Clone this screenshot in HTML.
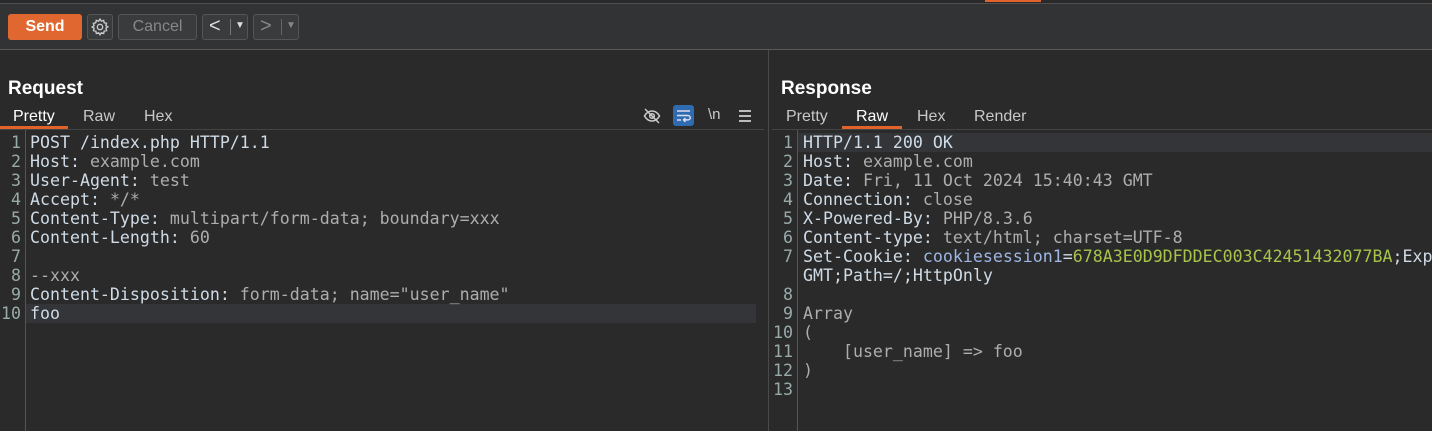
<!DOCTYPE html>
<html><head><meta charset="utf-8"><style>
*{margin:0;padding:0;box-sizing:border-box}
body{width:1432px;height:431px;background:#2a2a2a;overflow:hidden;position:relative;font-family:"Liberation Sans",sans-serif;color:#ddd}
.top{position:absolute;left:0;top:0;width:1432px;height:3px;background:#2a2a2a}
.orange{position:absolute;left:985px;top:0;width:56px;height:2px;background:#e2622c}
.tb{position:absolute;left:0;top:3px;width:1432px;height:47px;background:#323335;border-top:1px solid #4e4e4e;border-bottom:1px solid #5a5a5a}
.btn{position:absolute;top:11px;height:26px;border:1px solid #555;border-radius:3px;background:#3a3b3d;color:#888;font-size:16px;line-height:24px;text-align:center}
.send{left:8px;width:74px;background:#e0672f;border-color:#e0672f;color:#fff;font-weight:bold}
h2{position:absolute;top:78px;font-size:19px;font-weight:bold;color:#fff}
.tabs{position:absolute;top:108px;font-size:16px;color:#c8c8c8}
.tabs span{position:absolute;top:0;white-space:nowrap}
.ul{position:absolute;height:3px;background:#e2622c;top:126px}
.hl{position:absolute;height:1px;background:#444;top:129px}
.code{position:absolute;top:133px;font-family:"DejaVu Sans Mono",monospace;font-size:16.6px;line-height:19px;white-space:pre}
.gut{position:absolute;top:130px;height:301px;border-right:1px solid #555}
.ln{color:#9aa;text-align:right}
.k{color:#cfdbe6}.v{color:#adadad}.cn{color:#9db6e4}.cv{color:#a7c34b}
.row{position:absolute;height:19px;background:#333538}
</style></head><body>
<div class="top"></div><div class="orange"></div>
<div class="tb">
<div class="btn send" style="top:10px">Send</div>
<div class="btn" style="left:87px;top:10px;width:26px;padding-top:2px"><svg width="20" height="20" viewBox="0 0 24 24" fill="none" stroke="#ccc" stroke-width="1.6"><circle cx="12" cy="12" r="3.2"/><path d="M12 2.5l1.6 2.4 2.8-.9.6 2.9 2.9.6-.9 2.8 2.4 1.6-2.4 1.6.9 2.8-2.9.6-.6 2.9-2.8-.9-1.6 2.4-1.6-2.4-2.8.9-.6-2.9-2.9-.6.9-2.8L2.5 12l2.4-1.6-.9-2.8 2.9-.6.6-2.9 2.8.9z"/></svg></div>
<div class="btn" style="left:118px;top:10px;width:79px">Cancel</div>
<div class="btn" style="left:202px;top:10px;width:46px;color:#ddd;text-align:left;padding-left:6px;font-size:20px;line-height:22px">&lt;<span style="position:absolute;left:27px;top:4px;width:1px;height:16px;background:#777"></span><span style="position:absolute;left:32px;top:0;font-size:10px">▼</span></div>
<div class="btn" style="left:253px;top:10px;width:46px;color:#888;text-align:left;padding-left:6px;font-size:20px;line-height:22px">&gt;<span style="position:absolute;left:27px;top:4px;width:1px;height:16px;background:#666"></span><span style="position:absolute;left:32px;top:0;font-size:10px">▼</span></div>
</div>
<div style="position:absolute;left:768px;top:50px;width:1px;height:381px;background:#4a4a4a"></div>
<h2 style="left:8px">Request</h2>
<h2 style="left:781px">Response</h2>
<div class="tabs"><span style="left:13px;color:#fff">Pretty</span><span style="left:83px">Raw</span><span style="left:144px">Hex</span>
<span style="left:786px">Pretty</span><span style="left:856px;color:#fff">Raw</span><span style="left:917px">Hex</span><span style="left:974px">Render</span></div>
<div class="hl" style="left:0;width:764px"></div><div class="hl" style="left:772px;width:660px"></div>
<div class="ul" style="left:0;width:68px"></div><div class="ul" style="left:842px;width:60px"></div>
<svg style="position:absolute;left:643px;top:107px" width="18" height="18" viewBox="0 0 18 18" fill="none" stroke="#ccc" stroke-width="1.5"><path d="M1.5 9c2-3.5 4.5-5 7.5-5s5.5 1.5 7.5 5c-2 3.5-4.5 5-7.5 5S3.5 12.5 1.5 9z"/><circle cx="9" cy="9" r="2.3"/><path d="M2 2l14 14"/></svg>
<div style="position:absolute;left:673px;top:105px;width:21px;height:21px;background:#2e6bb0;border-radius:3px"><svg width="21" height="21" viewBox="0 0 21 21" fill="none" stroke="#dde" stroke-width="1.5"><path d="M4 6h13M4 10.5h11a2.2 2.2 0 010 4.4h-4M4 15h4M12.5 13l-2 1.9 2 1.9"/></svg></div>
<div style="position:absolute;left:708px;top:106px;font-size:15px;color:#ccc">\n</div>
<div style="position:absolute;left:739px;top:110px;width:12px"><div style="height:2px;background:#bbb;margin-bottom:3px"></div><div style="height:2px;background:#bbb;margin-bottom:3px"></div><div style="height:2px;background:#bbb"></div></div>
<div class="row" style="left:26px;top:304px;width:730px"></div>
<div class="row" style="left:798px;top:133px;width:634px"></div>
<div class="gut" style="left:0;width:26px"></div>
<div class="gut" style="left:772px;width:26px"></div>
<div class="code ln" style="left:0;width:21px">1
2
3
4
5
6
7
8
9
10</div>
<div class="code" style="left:30px"><span class="k">POST /index.php HTTP/1.1</span>
<span class="k">Host: </span><span class="v">example.com</span>
<span class="k">User-Agent: </span><span class="v">test</span>
<span class="k">Accept: </span><span class="v">*/*</span>
<span class="k">Content-Type: </span><span class="v">multipart/form-data; boundary=xxx</span>
<span class="k">Content-Length: </span><span class="v">60</span>

<span class="v">--xxx</span>
<span class="k">Content-Disposition: </span><span class="v">form-data; name="user_name"</span>
<span class="k">foo</span></div>
<div class="code ln" style="left:772px;width:21px">1
2
3
4
5
6
7

8
9
10
11
12
13</div>
<div class="code" style="left:803px"><span class="k">HTTP/1.1 200 OK</span>
<span class="k">Host: </span><span class="v">example.com</span>
<span class="k">Date: </span><span class="v">Fri, 11 Oct 2024 15:40:43 GMT</span>
<span class="k">Connection: </span><span class="v">close</span>
<span class="k">X-Powered-By: </span><span class="v">PHP/8.3.6</span>
<span class="k">Content-type: </span><span class="v">text/html; charset=UTF-8</span>
<span class="k">Set-Cookie: </span><span class="cn">cookiesession1</span><span class="k">=</span><span class="cv">678A3E0D9DFDDEC003C42451432077BA</span><span class="k">;Exp</span>
<span class="k">GMT;Path=/;HttpOnly</span>

<span class="v">Array</span>
<span class="v">(</span>
<span class="v">    [user_name] =&gt; foo</span>
<span class="v">)</span>
</div>
</body></html>
